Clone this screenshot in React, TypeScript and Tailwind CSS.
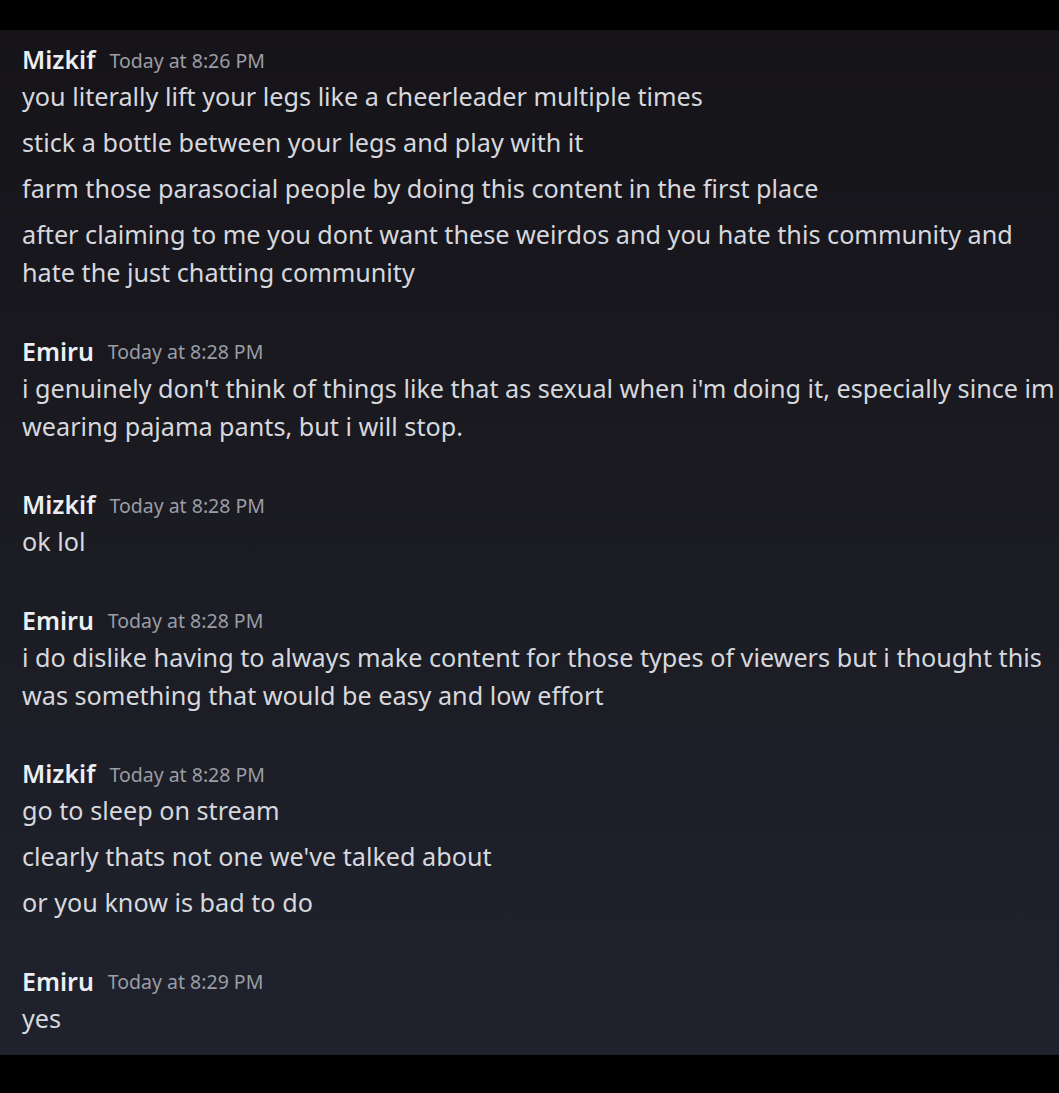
type Message = { author: string; time: string; lines: string[][] };

const MESSAGES: Message[] = [
  {
    author: 'Mizkif',
    time: 'Today at 8:26 PM',
    lines: [
      ['you literally lift your legs like a cheerleader multiple times'],
      ['stick a bottle between your legs and play with it'],
      ['farm those parasocial people by doing this content in the first place'],
      [
        'after claiming to me you dont want these weirdos and you hate this community and',
        'hate the just chatting community',
      ],
    ],
  },
  {
    author: 'Emiru',
    time: 'Today at 8:28 PM',
    lines: [
      [
        "i genuinely don't think of things like that as sexual when i'm doing it, especially since im",
        'wearing pajama pants, but i will stop.',
      ],
    ],
  },
  {
    author: 'Mizkif',
    time: 'Today at 8:28 PM',
    lines: [['ok lol']],
  },
  {
    author: 'Emiru',
    time: 'Today at 8:28 PM',
    lines: [
      [
        'i do dislike having to always make content for those types of viewers but i thought this',
        'was something that would be easy and low effort',
      ],
    ],
  },
  {
    author: 'Mizkif',
    time: 'Today at 8:28 PM',
    lines: [
      ['go to sleep on stream'],
      ["clearly thats not one we've talked about"],
      ['or you know is bad to do'],
    ],
  },
  {
    author: 'Emiru',
    time: 'Today at 8:29 PM',
    lines: [['yes']],
  },
];

export default function App() {
  return (
    <div className="h-[1093px] w-full bg-black pt-[30px] overflow-hidden">
      <div
        className="h-[1025px] overflow-hidden bg-gradient-to-b from-[#161419] via-[#1b1b22] to-[#1f222d] pt-[11px] pl-[22px]"
        style={{ fontFamily: '"Noto Sans", "Open Sans", sans-serif' }}
      >
        {MESSAGES.map((m, i) => (
          <div key={i} className={i === 0 ? '' : 'mt-[41.5px]'}>
            <div className="flex h-[36px] items-center gap-[14px] whitespace-nowrap">
              <span className="text-[25px] leading-[36px] font-semibold text-[#eceef2]">{m.author}</span>
              <span className="text-[19.5px] leading-[36px] pt-[3px] text-[#9a9da6]">{m.time}</span>
            </div>
            {m.lines.map((para, j) => (
              <div key={j} className={j === 0 ? '' : 'mt-[8px]'}>
                {para.map((line, k) => (
                  <div key={k} className="text-[25.2px] leading-[38px] text-[#d6d8de] whitespace-nowrap">
                    {line}
                  </div>
                ))}
              </div>
            ))}
          </div>
        ))}
      </div>
    </div>
  );
}
